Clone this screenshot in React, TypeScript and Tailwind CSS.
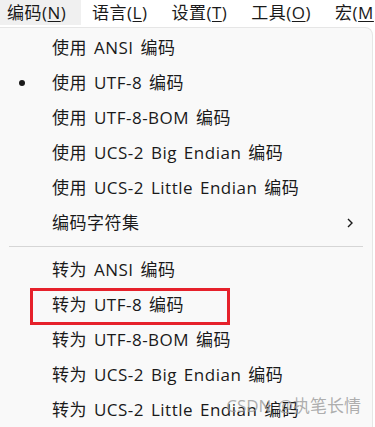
import React from "react";

const font = {
  fontFamily: '"Open Sans", "Noto Sans CJK SC", sans-serif',
  wordSpacing: "2px",
};

const menus = [
  { label: "编码", key: "N", active: true },
  { label: "语言", key: "L" },
  { label: "设置", key: "T" },
  { label: "工具", key: "O" },
  { label: "宏", key: "M", cut: true },
];

const useItems = [
  "使用 ANSI 编码",
  "使用 UTF-8 编码",
  "使用 UTF-8-BOM 编码",
  "使用 UCS-2 Big Endian 编码",
  "使用 UCS-2 Little Endian 编码",
];

const convertItems = [
  "转为 ANSI 编码",
  "转为 UTF-8 编码",
  "转为 UTF-8-BOM 编码",
  "转为 UCS-2 Big Endian 编码",
  "转为 UCS-2 Little Endian 编码",
];

function Row({
  label,
  checked,
  submenu,
  marked,
}: {
  label: string;
  checked?: boolean;
  submenu?: boolean;
  marked?: boolean;
}) {
  return (
    <div className="relative flex h-[35px] items-center">
      <div className="flex w-[52px] shrink-0 items-center justify-center pr-[8px]">
        {checked && <span className="block h-[6px] w-[6px] rounded-full bg-[#1a1a1a]" />}
      </div>
      <span className="flex-1 whitespace-nowrap text-[17px] tracking-[0.5px] text-[#1a1a1a]">{label}</span>
      {submenu && (
        <svg width="10" height="14" viewBox="0 0 10 14" className="mr-[17px]">
          <path d="M3 3 L7 7 L3 11" fill="none" stroke="#1a1a1a" strokeWidth="1.4" />
        </svg>
      )}
      {marked && (
        <div className="absolute left-[30px] top-[1px] h-[37px] w-[200px] border-[3px] border-[#e6212b]" />
      )}
    </div>
  );
}

export default function App() {
  return (
    <div className="relative h-[427px] w-[375px] overflow-hidden bg-white" style={font}>
      <div className="flex h-[25px] items-center overflow-hidden bg-white">
        {menus.map((m) => (
          <div
            key={m.key}
            className={
              "flex h-full shrink-0 items-center whitespace-nowrap text-[17px] tracking-[0.5px] text-[#1a1a1a] " +
              (m.active ? "w-[81px] bg-[#f0f0f0] pl-[7px]" : "pl-[11px] pr-[13px]")
            }
          >
            {m.label}(<span className="underline underline-offset-2">{m.key}</span>
            {m.cut ? "" : ")"}
          </div>
        ))}
      </div>
      <div className="mt-[2px] h-[400px] w-[373px] rounded-tr-[8px] border-t border-r border-[#e6e6e6] bg-[#f9f9f9] pt-[2px]">
        {useItems.map((t, i) => (
          <Row key={t} label={t} checked={i === 1} />
        ))}
        <Row label="编码字符集" submenu />
        <div className="flex h-[12px] items-center px-[9px]">
          <div className="h-px w-full bg-[#d6d6d6]" />
        </div>
        {convertItems.map((t, i) => (
          <Row key={t} label={t} marked={i === 1} />
        ))}
      </div>
      <div className="absolute bottom-[9px] right-[14px] whitespace-nowrap text-[17px] text-[#9a9a9a]/80">
        CSDN @执笔长情
      </div>
    </div>
  );
}
